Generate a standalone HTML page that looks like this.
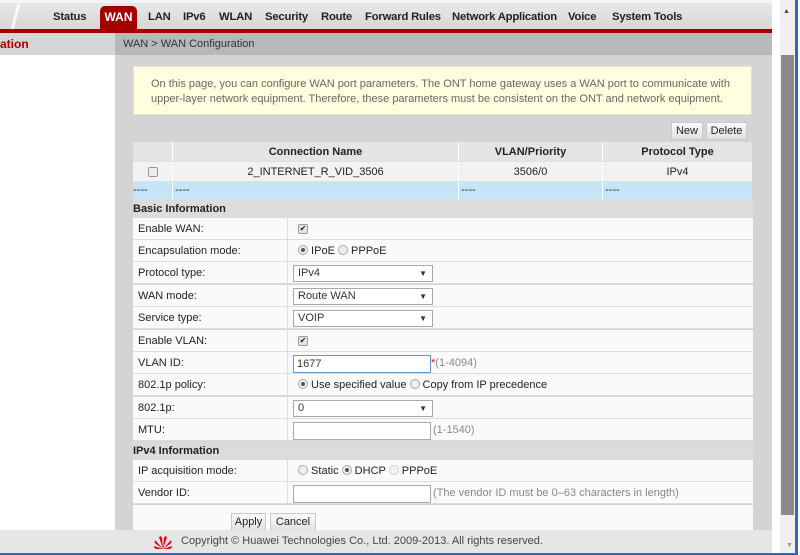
<!DOCTYPE html>
<html><head><meta charset="utf-8"><style>
*{box-sizing:border-box;margin:0;padding:0}
body{width:800px;height:555px;overflow:hidden;position:relative;background:#fff;font-family:"Liberation Sans",Arial,sans-serif;font-size:11px;color:#333}
.abs{position:absolute}
#top{left:0;top:0;width:772px;height:30px;background:linear-gradient(#e8e8e8,#d6d6d6);border-top:3px solid #f4f4f4}
#red{left:0;top:29px;width:772px;height:4px;background:#a50000}
.nav{position:absolute;top:11px;font-weight:bold;font-size:11.3px;color:#222;letter-spacing:-0.2px}
#wan{left:100px;top:6px;width:37px;height:25px;background:#a50000;border-radius:5px 5px 0 0;color:#fff;font-weight:bold;font-size:12px;text-align:center;line-height:22px}
#side{left:0;top:33px;width:115px;height:22px;background:#d6d6d6;color:#a00;font-weight:bold;font-size:12px;line-height:22px}
#bc{left:115px;top:33px;width:657px;height:22px;background:#b8b8b8;color:#333;font-size:11px;line-height:22px;padding-left:8px}
#main{left:115px;top:55px;width:657px;height:475px;background:#d4d4d4}
#note{left:133px;top:66px;width:619px;height:49px;background:#ffffdf;border:1px solid #e4e6cc;color:#666;padding:10px 17px;line-height:15px}
.btn{position:absolute;height:18px;background:linear-gradient(#fafafa,#e0e0e0);border:1px solid #c8c8c8;font-size:11px;line-height:16px;text-align:center;color:#222}
.row{position:absolute;left:133px;width:619px;border-bottom:1px solid #e0e0e0}
.c{position:absolute;top:0;height:100%;text-align:center}
.frm{position:absolute;left:133px;width:620px;height:22px;background:#fafafa;border-bottom:1px solid #dedede}
.frm .l{position:absolute;left:0;top:0;width:155px;height:100%;border-right:1px solid #dedede;padding-left:5px;line-height:22px;color:#222}
.frm .v{position:absolute;left:160px;top:0;height:100%;line-height:22px;color:#222}
.sel{position:absolute;left:160px;top:3px;width:140px;height:17px;border:1px solid #a8a8a8;background:#fff;padding-left:4px;line-height:15px}
.sel:after{content:"▼";position:absolute;right:5px;top:0;font-size:8px}
.inp{position:absolute;left:160px;top:3px;width:138px;height:18px;border:1px solid #a8a8a8;background:#fff;padding-left:3px;line-height:16px}
.hint{position:absolute;left:300px;top:0;line-height:22px;color:#888}
.cb{display:inline-block;width:10px;height:10px;border:1px solid #999;border-radius:2px;background:#e4e4e4;vertical-align:middle;font-size:8px;line-height:8px;text-align:center}
.rd{display:inline-block;width:10px;height:10px;border:1px solid #aaa;border-radius:50%;background:#eee;vertical-align:-1px;position:relative}
.rd.on:after{content:"";position:absolute;left:2px;top:2px;width:4px;height:4px;border-radius:50%;background:#555}
.hd{position:absolute;left:133px;width:620px;height:18px;background:#dcdcdc;font-weight:bold;color:#222;line-height:18px}
</style></head><body>
<div id="top" class="abs"></div>
<div class="abs" style="left:14px;top:4px;width:3px;height:25px;background:#fff;transform:skewX(-15deg);opacity:.8"></div>
<div id="red" class="abs"></div>
<div class="nav" style="left:53px">Status</div>
<div id="wan" class="abs">WAN</div>
<div class="nav" style="left:148px">LAN</div>
<div class="nav" style="left:183px">IPv6</div>
<div class="nav" style="left:219px">WLAN</div>
<div class="nav" style="left:265px">Security</div>
<div class="nav" style="left:321px">Route</div>
<div class="nav" style="left:365px">Forward Rules</div>
<div class="nav" style="left:452px">Network Application</div>
<div class="nav" style="left:568px">Voice</div>
<div class="nav" style="left:612px">System Tools</div>
<div id="side" class="abs">ation</div>
<div id="bc" class="abs">WAN &gt; WAN Configuration</div>
<div id="main" class="abs"></div>
<div id="note" class="abs">On this page, you can configure WAN port parameters. The ONT home gateway uses a WAN port to communicate with upper-layer network equipment. Therefore, these parameters must be consistent on the ONT and network equipment.</div>
<div class="btn" style="left:671px;top:122px;width:32px">New</div>
<div class="btn" style="left:706px;top:122px;width:41px">Delete</div>
<div class="row" style="top:142px;height:20px;background:#e4e4e4;font-weight:bold;color:#222;line-height:20px">
<div class="c" style="left:0;width:40px;border-right:1px solid #fff"></div>
<div class="c" style="left:40px;width:286px;border-right:1px solid #fff">Connection Name</div>
<div class="c" style="left:326px;width:144px;border-right:1px solid #fff">VLAN/Priority</div>
<div class="c" style="left:470px;width:149px">Protocol Type</div></div>
<div class="row" style="top:162px;height:20px;background:#f2f2f2;line-height:20px;color:#222">
<div class="c" style="left:0;width:40px;border-right:1px solid #fff"><span class="cb" style="background:#eee"></span></div>
<div class="c" style="left:40px;width:286px;border-right:1px solid #fff">2_INTERNET_R_VID_3506</div>
<div class="c" style="left:326px;width:144px;border-right:1px solid #fff">3506/0</div>
<div class="c" style="left:470px;width:149px">IPv4</div></div>
<div class="row" style="top:182px;height:18px;background:#c6e4f8;line-height:16px;color:#222">
<div class="c" style="left:0;width:40px;border-right:1px solid #fff;text-align:left">----</div>
<div class="c" style="left:40px;width:286px;border-right:1px solid #fff;text-align:left;padding-left:2px">----</div>
<div class="c" style="left:326px;width:144px;border-right:1px solid #fff;text-align:left;padding-left:2px">----</div>
<div class="c" style="left:470px;width:149px;text-align:left;padding-left:2px">----</div></div>
<div class="hd" style="top:200px">Basic Information</div>
<div class="frm" style="top:218px"><div class="l">Enable WAN:</div><div class="v" style="left:165px"><span class="cb">✔</span></div></div>
<div class="frm" style="top:240px"><div class="l">Encapsulation mode:</div><div class="v" style="left:165px"><span class="rd on"></span> IPoE <span class="rd"></span> PPPoE</div></div>
<div class="frm" style="top:262px"><div class="l">Protocol type:</div><div class="sel">IPv4</div></div>
<div class="frm" style="top:285px"><div class="l">WAN mode:</div><div class="sel">Route WAN</div></div>
<div class="frm" style="top:307px"><div class="l">Service type:</div><div class="sel">VOIP</div></div>
<div class="frm" style="top:330px"><div class="l">Enable VLAN:</div><div class="v" style="left:165px"><span class="cb">✔</span></div></div>
<div class="frm" style="top:352px"><div class="l">VLAN ID:</div><div class="inp" style="border-color:#5b9bd5">1677</div><div class="hint" style="left:298px"><span style="color:red">*</span>(1-4094)</div></div>
<div class="frm" style="top:374px"><div class="l">802.1p policy:</div><div class="v" style="left:165px"><span class="rd on"></span> Use specified value <span class="rd"></span> Copy from IP precedence</div></div>
<div class="frm" style="top:397px"><div class="l">802.1p:</div><div class="sel">0</div></div>
<div class="frm" style="top:419px"><div class="l">MTU:</div><div class="inp"></div><div class="hint">(1-1540)</div></div>
<div class="hd" style="top:442px">IPv4 Information</div>
<div class="frm" style="top:460px"><div class="l">IP acquisition mode:</div><div class="v" style="left:165px"><span class="rd"></span> Static <span class="rd on"></span> DHCP <span class="rd" style="opacity:.5"></span> PPPoE</div></div>
<div class="frm" style="top:482px"><div class="l">Vendor ID:</div><div class="inp"></div><div class="hint">(The vendor ID must be 0–63 characters in length)</div></div>
<div class="frm" style="top:505px;height:25px;border:0"></div>
<div class="btn" style="left:231px;top:513px;width:35px;height:19px">Apply</div>
<div class="btn" style="left:270px;top:513px;width:46px;height:19px">Cancel</div>
<div class="abs" style="left:0;top:530px;width:772px;height:25px;background:#e6e6e6"></div>
<svg class="abs" style="left:153px;top:535px" width="20" height="15" viewBox="0 0 20 15"><g fill="#e60012"><path d="M10 14 L6 2 Q8 0 9 3Z"/><path d="M10 14 L14 2 Q12 0 11 3Z"/><path d="M10 14 L2 5 Q1 8 3 9Z"/><path d="M10 14 L18 5 Q19 8 17 9Z"/><path d="M10 14 L1 11 Q1 14 4 14Z"/><path d="M10 14 L19 11 Q19 14 16 14Z"/></g></svg>
<div class="abs" style="left:181px;top:535px;font-size:11px;color:#444">Copyright © Huawei Technologies Co., Ltd. 2009-2013. All rights reserved.</div>
<div class="abs" style="left:772px;top:0;width:8px;height:555px;background:#fff"></div>
<div class="abs" style="left:780px;top:0;width:15px;height:555px;background:#f0f0f0"></div>
<div class="abs" style="left:783px;top:8px;font-size:7px;color:#444">▲</div>
<div class="abs" style="left:781px;top:55px;width:13px;height:460px;background:#8a8a8a"></div>
<div class="abs" style="left:786px;top:542px;font-size:7px;color:#999">▼</div>
<div class="abs" style="left:795px;top:0;width:3px;height:555px;background:#3465b8"></div>
<div class="abs" style="left:0;top:553px;width:798px;height:2px;background:#3465b8"></div>
</body></html>
